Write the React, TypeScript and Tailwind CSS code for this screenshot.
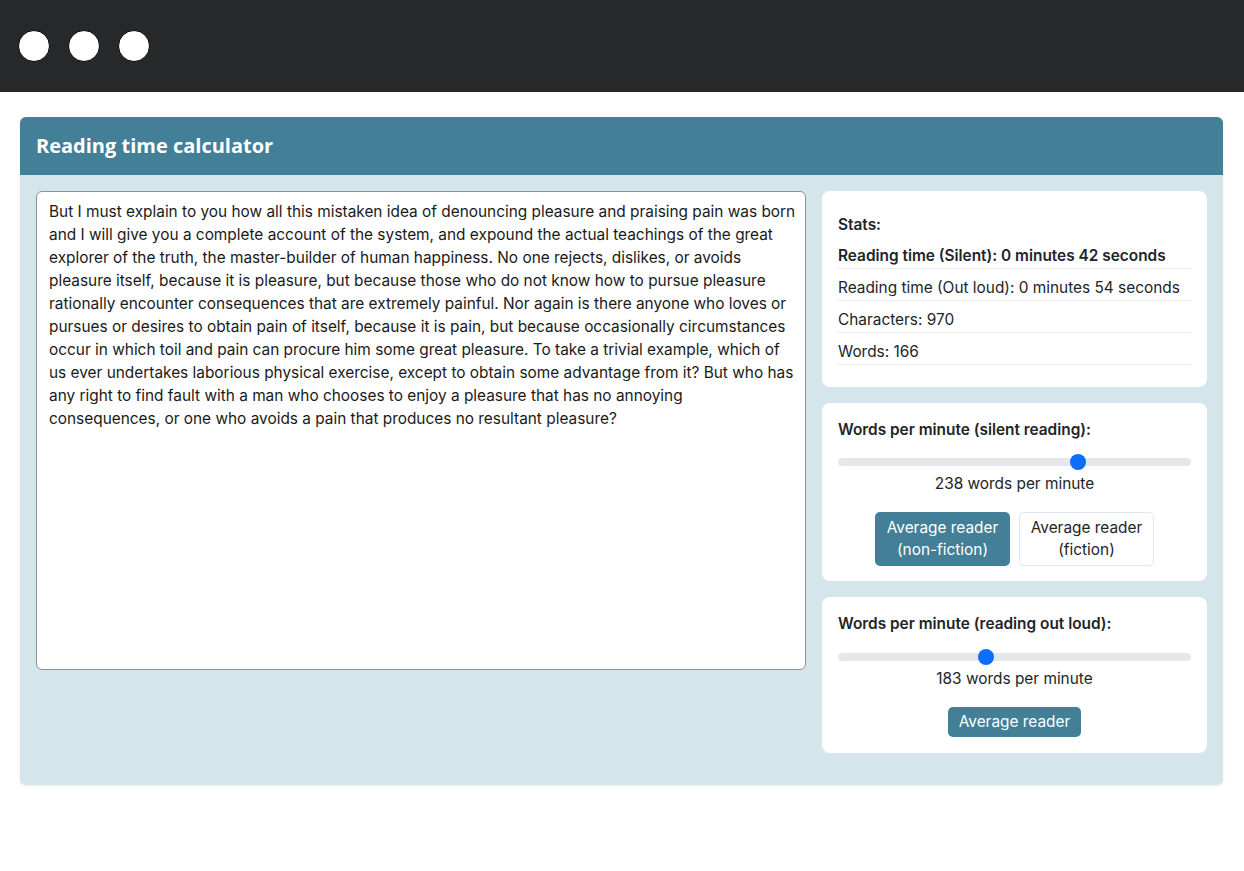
import React from "react";

const TEXT =
  "But I must explain to you how all this mistaken idea of denouncing pleasure and praising pain was born and I will give you a complete account of the system, and expound the actual teachings of the great explorer of the truth, the master-builder of human happiness. No one rejects, dislikes, or avoids pleasure itself, because it is pleasure, but because those who do not know how to pursue pleasure rationally encounter consequences that are extremely painful. Nor again is there anyone who loves or pursues or desires to obtain pain of itself, because it is pain, but because occasionally circumstances occur in which toil and pain can procure him some great pleasure. To take a trivial example, which of us ever undertakes laborious physical exercise, except to obtain some advantage from it? But who has any right to find fault with a man who chooses to enjoy a pleasure that has no annoying consequences, or one who avoids a pain that produces no resultant pleasure?";

function Slider({ pct, className }: { pct: number; className: string }) {
  return (
    <div className={"relative h-[8px] w-full rounded-full bg-[#e6e7eb] " + className}>
      <div
        className="absolute top-1/2 h-[16px] w-[16px] -translate-x-1/2 -translate-y-1/2 rounded-full bg-[#0d6efd]"
        style={{ left: `${pct}%` }}
      />
    </div>
  );
}

export default function App() {
  return (
    <div
      className="min-h-[871px] bg-white text-[#212529]"
      style={{ fontFamily: "Inter, 'Noto Sans', sans-serif" }}
    >
      <div className="flex h-[92px] items-center gap-[18px] bg-[#27282a] px-[18px]">
        <div className="h-[32px] w-[32px] rounded-full border border-black bg-white" />
        <div className="h-[32px] w-[32px] rounded-full border border-black bg-white" />
        <div className="h-[32px] w-[32px] rounded-full border border-black bg-white" />
      </div>
      <div className="pl-[20px] pr-[21px] pt-[25px]">
        <div className="overflow-hidden rounded-[6px] bg-[#d4e5ec] shadow-[0_1px_3px_rgba(0,0,0,0.08)]">
          <div className="flex h-[58px] items-center bg-[#437f97] px-[16px]">
            <h1
              className="text-[20px] font-bold text-white"
              style={{ fontFamily: "'Open Sans', Inter, sans-serif" }}
            >
              Reading time calculator
            </h1>
          </div>
          <div className="flex gap-[16px] px-[16px] pb-[32px] pt-[16px]">
            <div className="h-[479px] w-[770px] shrink-0 rounded-[6px] border border-[#8a8f98] bg-white pl-[12px] pr-[9px] pt-[8px] text-[15.4px] leading-[23px] text-[#1a1a1a]">
              {TEXT}
            </div>
            <div className="flex flex-1 flex-col gap-[16px]">
              <div className="rounded-[8px] bg-white px-[16px] pb-[22px] pt-[24px] text-[15.4px]">
                <div className="font-semibold leading-[20px]">Stats:</div>
                <div className="mt-[10px] border-b border-[#e9ecef] pb-[1px] font-semibold leading-[22px]">
                  Reading time (Silent): 0 minutes 42 seconds
                </div>
                <div className="mt-[8px] border-b border-[#e9ecef] pb-[1px] leading-[22px]">
                  Reading time (Out loud): 0 minutes 54 seconds
                </div>
                <div className="mt-[8px] border-b border-[#e9ecef] pb-[1px] leading-[22px]">
                  Characters: 970
                </div>
                <div className="mt-[8px] border-b border-[#e9ecef] pb-[1px] leading-[22px]">
                  Words: 166
                </div>
              </div>
              <div className="rounded-[8px] bg-white px-[16px] pb-[15px] pt-[16px] text-[15.4px]">
                <div className="font-semibold leading-[22px]">
                  Words per minute (silent reading):
                </div>
                <Slider pct={68.1} className="mt-[17px]" />
                <div className="mt-[7px] text-center leading-[22px]">
                  238 words per minute
                </div>
                <div className="mt-[17px] flex justify-center gap-[9px]">
                  <button className="h-[54px] w-[135px] rounded-[5px] bg-[#437f97] text-[15.4px] leading-[22px] text-white">
                    Average reader
                    <br />
                    (non-fiction)
                  </button>
                  <button className="h-[54px] w-[135px] rounded-[5px] border border-[#dce8ee] bg-white text-[15.4px] leading-[22px] text-[#212529]">
                    Average reader
                    <br />
                    (fiction)
                  </button>
                </div>
              </div>
              <div className="rounded-[8px] bg-white px-[16px] pb-[16px] pt-[16px] text-[15.4px]">
                <div className="font-semibold leading-[22px]">
                  Words per minute (reading out loud):
                </div>
                <Slider pct={41.8} className="mt-[18px]" />
                <div className="mt-[7px] text-center leading-[22px]">
                  183 words per minute
                </div>
                <div className="mt-[17px] flex justify-center">
                  <button className="h-[30px] w-[133px] rounded-[5px] bg-[#437f97] text-[15.4px] leading-[22px] text-white">
                    Average reader
                  </button>
                </div>
              </div>
            </div>
          </div>
        </div>
      </div>
    </div>
  );
}
